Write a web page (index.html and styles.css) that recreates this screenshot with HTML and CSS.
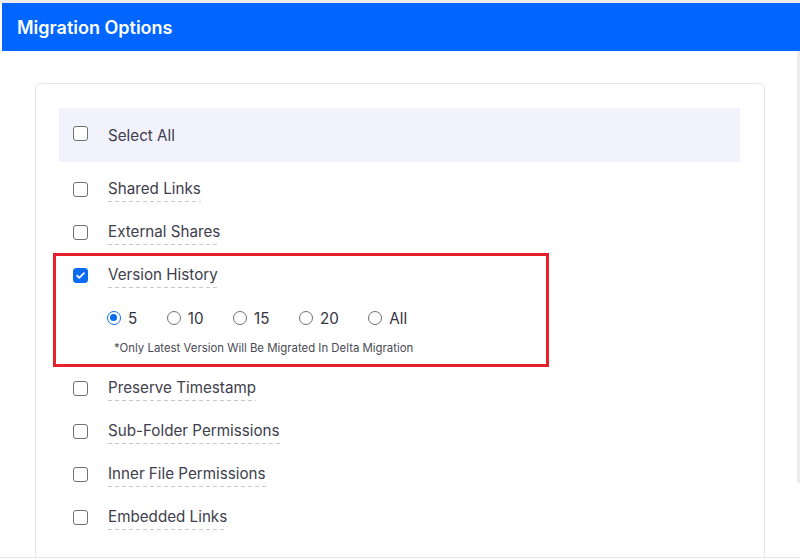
FILE: index.html
```html
<!DOCTYPE html>
<html>
<head>
<meta charset="utf-8">
<link rel="stylesheet" href="styles.css">
</head>
<body>
<div class="modal">
  <div class="header">Migration Options</div>
  <div class="content">
    <div class="scroll-thumb"></div>
    <div class="card">
      <div class="select-all">
        <span class="box"></span>
        <span class="sa-label">Select All</span>
      </div>
      <div class="options">
        <div class="row"><span class="box"></span><span class="label">Shared Links</span></div>
        <div class="row"><span class="box"></span><span class="label">External Shares</span></div>
        <div class="version">
          <div class="row"><span class="box checked"><svg viewBox="0 0 16 16" width="11" height="11"><path d="M3 8.2l3.2 3.2L13 4.6" fill="none" stroke="#fff" stroke-width="2.4" stroke-linecap="round" stroke-linejoin="round"/></svg></span><span class="label">Version History</span></div>
          <div class="radios">
            <span class="radio-item"><span class="radio on"></span>5</span>
            <span class="radio-item"><span class="radio"></span>10</span>
            <span class="radio-item"><span class="radio"></span>15</span>
            <span class="radio-item"><span class="radio"></span>20</span>
            <span class="radio-item"><span class="radio"></span>All</span>
          </div>
          <div class="note">*Only Latest Version Will Be Migrated In Delta Migration</div>
        </div>
        <div class="row"><span class="box"></span><span class="label">Preserve Timestamp</span></div>
        <div class="row"><span class="box"></span><span class="label">Sub-Folder Permissions</span></div>
        <div class="row"><span class="box"></span><span class="label">Inner File Permissions</span></div>
        <div class="row"><span class="box"></span><span class="label">Embedded Links</span></div>
      </div>
    </div>
  </div>
</div>
</body>
</html>
```
FILE: styles.css
```css
html, body {
  margin: 0;
  padding: 0;
  background: #ffffff;
}
body {
  font-family: "Inter", "Open Sans", "Liberation Sans", sans-serif;
  color: #3e3e4c;
}
.modal {
  width: 800px;
  height: 560px;
  border-top: 3px solid #ececec;
  box-sizing: border-box;
  overflow: hidden;
}
.header {
  height: 48px;
  margin-left: 2px;
  background: #0066ff;
  color: #ffffff;
  font-size: 18px;
  font-weight: 600;
  display: flex;
  align-items: center;
  padding-left: 15px;
}
.content {
  position: relative;
  height: 507px;
  box-sizing: border-box;
  padding: 32px 35px 0 35px;
  border-bottom: 1px solid #e6e6e6;
  overflow: hidden;
}
.scroll-thumb {
  position: absolute;
  right: 0;
  top: 0;
  width: 3px;
  height: 432px;
  background: #ececec;
}
.card {
  width: 730px;
  height: 520px;
  box-sizing: border-box;
  border: 1px solid #e6e6e6;
  border-radius: 6px;
  padding: 24px 24px 0 23px;
}
.select-all {
  height: 54px;
  background: #f2f2fd;
  display: flex;
  align-items: center;
  padding-left: 14px;
}
.box {
  width: 15px;
  height: 15px;
  box-sizing: border-box;
  border: 1.5px solid #707070;
  border-radius: 3px;
  flex: none;
  display: flex;
  align-items: center;
  justify-content: center;
  background: #fff;
}
.box.checked {
  background: #0b6cf2;
  border-color: #0b6cf2;
}
.select-all .box {
  margin-top: -3px;
}
.sa-label {
  margin-left: 20px;
  font-size: 15.2px;
  color: #3e3e4c;
}
.options {
  padding-top: 4.5px;
}
.row {
  height: 43px;
  display: flex;
  align-items: center;
  padding-left: 14px;
}
.label {
  margin-left: 20px;
  font-size: 15.2px;
  line-height: 18px;
  padding-bottom: 4px;
  margin-top: 6px;
  background-image: repeating-linear-gradient(90deg, #c9c9c9 0 4px, transparent 4px 7px);
  background-size: 100% 1px;
  background-repeat: no-repeat;
  background-position: left bottom;
}
.row .box {
  margin-top: 2px;
}
.version {
  position: relative;
  padding-bottom: 9.5px;
}
.version::after {
  content: "";
  position: absolute;
  left: -6px;
  top: 0.5px;
  width: 496px;
  height: 114px;
  box-sizing: border-box;
  border: 3px solid #e8202a;
}
.radios {
  height: 26px;
  margin-top: 9.5px;
  padding-left: 48px;
  display: flex;
  align-items: center;
}
.radio-item {
  display: flex;
  align-items: center;
  font-size: 15.2px;
  color: #333340;
  margin-right: 29.5px;
}
.radio {
  width: 14px;
  height: 14px;
  box-sizing: border-box;
  border: 1.5px solid #707070;
  border-radius: 50%;
  margin-right: 7px;
  position: relative;
}
.radio.on {
  border: 1.5px solid #0b6cf2;
}
.radio.on::after {
  content: "";
  position: absolute;
  left: 2px;
  top: 2px;
  width: 7px;
  height: 7px;
  border-radius: 50%;
  background: #0b6cf2;
}
.note {
  height: 16px;
  margin-top: 9px;
  padding-left: 55px;
  font-size: 11.4px;
  line-height: 16px;
  color: #4a4a55;
}
```
